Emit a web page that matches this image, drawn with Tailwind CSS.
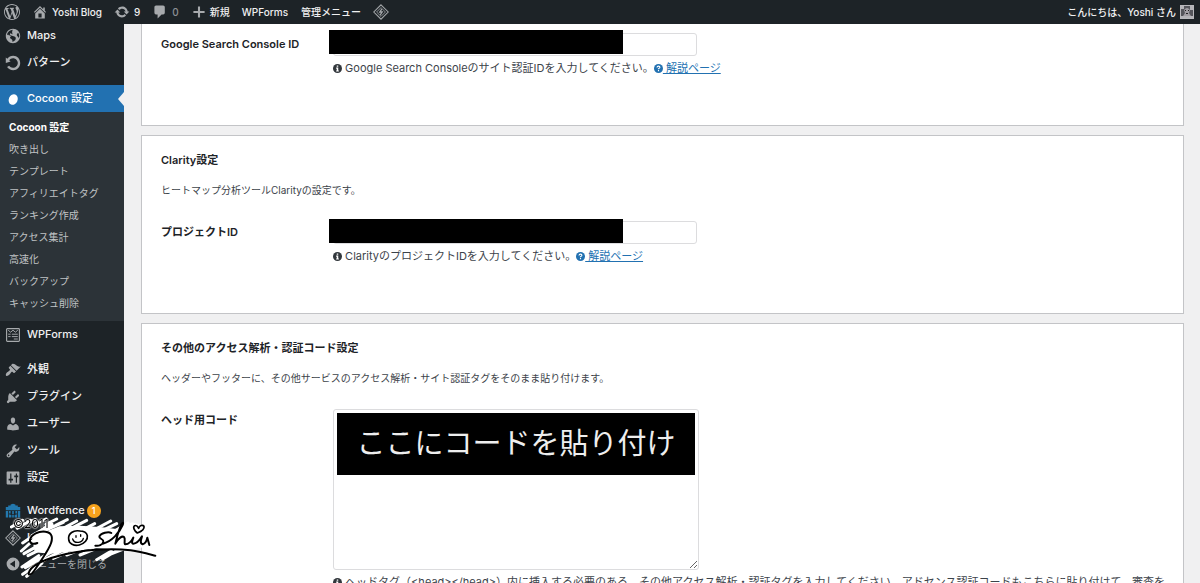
<!DOCTYPE html>
<html lang="ja">
<head>
    <meta charset="UTF-8">
    <meta name="viewport" content="width=device-width, initial-scale=1.0">
    <title>Cocoon 設定 ‹ Yoshi Blog — WordPress</title>
    <script src="https://cdn.jsdelivr.net/npm/@tailwindcss/browser@4"></script>
</head>
<body class="h-screen overflow-hidden bg-[#f0f0f1] font-[Inter,'Noto_Sans_CJK_JP',sans-serif] text-[11px] text-[#3c434a]">

    <!-- Admin bar -->
    <header class="fixed inset-x-0 top-0 z-20 flex h-6 items-center justify-between bg-[#1d2327] pr-[6px] pl-1 text-[10px] font-medium text-[#f0f0f1]">
        <nav class="flex items-center gap-3">
            <a href="#" aria-label="WordPress" class="text-[#a7aaad]">
                <svg class="size-4" viewBox="0 0 20 20" fill="currentColor"><path d="M20 10c0-5.51-4.49-10-10-10C4.48 0 0 4.49 0 10c0 5.52 4.48 10 10 10 5.51 0 10-4.48 10-10zM7.78 15.37L4.37 6.22c.55-.02 1.17-.08 1.17-.08.5-.06.44-1.13-.06-1.11 0 0-1.45.11-2.37.11-.18 0-.37 0-.58-.01C4.12 2.69 6.87 1.11 10 1.11c2.33 0 4.45.87 6.05 2.34-.68-.11-1.65.39-1.65 1.58 0 .74.45 1.36.9 2.1.35.61.55 1.36.55 2.46 0 1.49-1.4 5-1.4 5l-3.03-8.37c.54-.02.82-.17.82-.17.5-.05.44-1.25-.06-1.22 0 0-1.44.12-2.38.12-.87 0-2.33-.12-2.33-.12-.5-.03-.56 1.2-.06 1.22l.92.08 1.26 3.41zM17.41 10c.24-.64.74-1.87.43-4.25.7 1.29 1.05 2.71 1.05 4.25 0 3.29-1.73 6.24-4.4 7.78.97-2.59 1.94-5.2 2.92-7.78zM6.1 18.09C3.12 16.65 1.11 13.53 1.11 10c0-1.3.23-2.48.72-3.59C3.25 10.3 4.67 14.2 6.1 18.09zm4.03-6.63l2.58 6.98c-.86.29-1.76.45-2.71.45-.79 0-1.57-.11-2.29-.33.81-2.38 1.62-4.74 2.42-7.1z"/></svg>
            </a>
            <a href="#" class="flex items-center gap-1">
                <svg class="size-4 text-[#a7aaad]" viewBox="0 0 20 20" fill="currentColor"><path d="M16 8.5l1.53 1.53-1.06 1.06L10 4.6l-6.47 6.49-1.06-1.06L10 2.5l4 4v-2h2v4zm-6-2.46l6 5.99V18H4v-5.97zM12 17v-5H8v5h4z"/></svg>
                Yoshi Blog
            </a>
            <a href="#" class="flex items-center gap-1">
                <svg class="size-4 text-[#a7aaad]" viewBox="0 0 20 20" fill="currentColor"><path d="M10.2 3.28c3.53 0 6.43 2.61 6.92 6h2.08l-3.5 4-3.5-4h2.32c-.45-1.97-2.21-3.45-4.32-3.45-1.45 0-2.73.71-3.54 1.78L4.95 5.66C6.23 4.2 8.11 3.28 10.2 3.28zm-.4 13.44c-3.52 0-6.43-2.61-6.92-6H.8l3.5-4c1.17 1.33 2.33 2.67 3.5 4H5.48c.45 1.97 2.21 3.45 4.32 3.45 1.45 0 2.73-.71 3.54-1.78l1.71 1.95c-1.28 1.46-3.15 2.38-5.25 2.38z"/></svg>
                9
            </a>
            <a href="#" class="flex items-center gap-1 text-[#8c8f94]">
                <svg class="size-4 text-[#a7aaad]" viewBox="0 0 20 20" fill="currentColor"><path d="M5 2h9c1.1 0 2 .9 2 2v7c0 1.1-.9 2-2 2h-2l-5 5v-5H5c-1.1 0-2-.9-2-2V4c0-1.1.9-2 2-2z"/></svg>
                0
            </a>
            <a href="#" class="flex items-center gap-[3px]">
                <svg class="size-4 text-[#a7aaad]" viewBox="0 0 20 20" fill="currentColor"><path d="M17 8.700v2.600h-5.700V17H8.700v-5.700H3V8.700h5.700V3h2.600v5.700z"/></svg>
                新規
            </a>
            <a href="#">WPForms</a>
            <a href="#" class="ml-px">管理メニュー</a>
            <a href="#" aria-label="LiteSpeed" class="text-[#a7aaad]">
                <svg class="size-4" viewBox="0 0 20 20" fill="none" stroke="currentColor"><path d="M10 1l9 9-9 9-9-9z" stroke-width="1.300"/><path d="M10 4.500l5.500 5.500-5.500 5.500L4.500 10z" stroke-width="1"/><path d="M11 6.500L8.500 10h3L9 13.500" stroke-width="1.600"/></svg>
            </a>
        </nav>
        <a href="#" class="flex items-center gap-1">
            こんにちは、Yoshi さん
            <svg class="size-[14px]" viewBox="0 0 14 14"><path d="M0 0h14v14H0z" fill="#b8b8bc"/><path d="M1 1h12v12H1z" fill="#55565c"/><path d="M1 1h3v3H1zM10 1h3v4h-3zM1 11h12v2H1z" fill="#b4b4b8"/><path d="M4 5q3-4 6 0l-1 3 2 3H3l2-3z" fill="#a09da3"/><path d="M5 5h1v1H5zM8 5h1v1H8zM6 8h2v1H6z" fill="#222"/></svg>
        </a>
    </header>

    <div class="flex h-full">
        <!-- Side menu -->
        <aside class="w-[124px] shrink-0 bg-[#1d2327] pt-[22px] font-medium text-[#f0f0f1]">
            <ul>
                <li><a href="#" class="flex h-[27px] items-center gap-[6px] pl-[5px]">
                    <svg class="size-4 text-[#a7aaad]" viewBox="-1 -1 20 20" fill="currentColor"><path d="M9 0C4.030 0 0 4.030 0 9s4.030 9 9 9 9-4.030 9-9-4.030-9-9-9zm3.460 11.950c0 1.470-.8 3.300-4.060 4.700.3-4.170-2.520-3.690-3.200-5 .126-1.100.804-2.063 1.800-2.550-1.552-.266-3-.96-4.180-2 .05.470.280.904.640 1.210-.782-.295-1.458-.817-1.940-1.500.977-3.225 3.883-5.482 7.250-5.630-.84 1.380-1.500 4.130 0 5.570C7.230 7 6.260 5 5.410 5.790c-1.130 1.060.330 2.510 3.420 3.080 3.290.590 3.660 1.580 3.630 3.080zm1.340-4c-.32-1.110.620-2.230 1.690-3.140 1.356 1.955 1.670 4.450.840 6.680-.77-1.890-2.170-2.320-2.530-3.570v.03z"/></svg>
                    Maps</a></li>
                <li><a href="#" class="flex h-[27px] items-center gap-[6px] pl-[5px]">
                    <svg class="size-4 text-[#a7aaad]" viewBox="0 0 20 20" fill="currentColor"><path d="M10.250 1.020c5.100 0 8.750 4.040 8.750 9s-3.650 9-8.750 9c-3.200 0-6.020-1.590-7.680-3.990l2.590-1.520c1.100 1.500 2.860 2.510 4.840 2.510 3.300 0 6-2.790 6-6s-2.700-6-6-6c-1.970 0-3.720 1-4.820 2.490L7 8.020l-6 2v-7L2.890 4.600c1.690-2.170 4.360-3.580 7.360-3.580z"/></svg>
                    パターン</a></li>
                <li class="mt-[9px]">
                    <a href="#" class="relative flex h-[27px] items-center gap-[6px] bg-[#2271b1] pl-[5px] text-white">
                        <svg class="size-4" viewBox="0 0 20 20" fill="currentColor"><ellipse cx="10.500" cy="10.500" rx="5.500" ry="6.800" transform="rotate(22 10 10)"/></svg>
                        Cocoon 設定
                        <span class="absolute top-[7px] right-0 border-y-[7px] border-r-[6px] border-y-transparent border-r-[#f0f0f1]"></span>
                    </a>
                    <ul class="bg-[#2c3338] pt-1 pb-[7px] pl-[9px] text-[10px] leading-[22px] font-normal text-[#c0c3c5]">
                        <li><a href="#" class="block font-bold text-white">Cocoon 設定</a></li>
                        <li><a href="#" class="block">吹き出し</a></li>
                        <li><a href="#" class="block">テンプレート</a></li>
                        <li><a href="#" class="block">アフィリエイトタグ</a></li>
                        <li><a href="#" class="block">ランキング作成</a></li>
                        <li><a href="#" class="block">アクセス集計</a></li>
                        <li><a href="#" class="block">高速化</a></li>
                        <li><a href="#" class="block">バックアップ</a></li>
                        <li><a href="#" class="block">キャッシュ削除</a></li>
                    </ul>
                </li>
                <li><a href="#" class="flex h-[27px] items-center gap-[6px] pl-[5px]">
                    <svg class="size-4 text-[#a7aaad]" viewBox="0 0 20 20" fill="none" stroke="currentColor"><rect x="2" y="2" width="16" height="16" rx="1" stroke-width="1.400"/><path d="M4 4l3 2.500L10 4l3 2.500L16 4M4 9h3M8.500 9H16M4 12h3M8.500 12H16M11 15h5" stroke-width="1.200"/></svg>
                    WPForms</a></li>
                <li class="mt-2"><a href="#" class="flex h-[27px] items-center gap-[6px] pl-[5px]">
                    <svg class="size-4 text-[#a7aaad]" viewBox="0 0 20 20" fill="currentColor"><path d="M14.480 11.060L7.410 3.990l1.500-1.500c.5-.56 2.300-.47 3.510.320 1.210.8 1.430 1.280 2.910 2.100 1.180.640 2.450 1.260 4.450.850zm-.71.710L6.700 4.700 4.930 6.470c-.39.390-.39 1.020 0 1.410l1.060 1.060c.390.390.390 1.030 0 1.420-.6.6-1.430 1.110-2.210 1.690-.35.260-.7.530-1.010.840C1.430 14.230.4 16.080 1.400 17.070c.990 1 2.840-.03 4.180-1.360.310-.31.580-.66.850-1.020.570-.78 1.080-1.610 1.690-2.210.390-.39 1.020-.39 1.410 0l1.060 1.060c.390.390 1.020.390 1.410 0z"/></svg>
                    外観</a></li>
                <li><a href="#" class="flex h-[27px] items-center gap-[6px] pl-[5px]">
                    <svg class="size-4 text-[#a7aaad]" viewBox="0 0 20 20" fill="currentColor"><path d="M13.110 4.360L9.870 7.600 8 5.730l3.240-3.240c.350-.34 1.050-.2 1.560.320.520.510.660 1.210.310 1.550zm-8 1.770l.91-1.120 9.010 9.010-1.190.840c-.71.710-2.630 1.160-3.820 1.160H6.140L4.900 17.260c-.59.590-1.540.590-2.120 0-.59-.58-.59-1.530 0-2.120l1.240-1.240v-3.880c0-1.130.4-3.190 1.090-3.890zm7.260 3.970l3.240-3.240c.340-.35 1.040-.21 1.550.310.520.510.660 1.210.310 1.550l-3.240 3.250z"/></svg>
                    プラグイン</a></li>
                <li><a href="#" class="flex h-[27px] items-center gap-[6px] pl-[5px]">
                    <svg class="size-4 text-[#a7aaad]" viewBox="0 0 20 20" fill="currentColor"><path d="M10 9.250c-2.270 0-2.730-3.440-2.730-3.440C7 4.020 7.820 2 9.970 2c2.160 0 2.980 2.020 2.710 3.810 0 0-.41 3.440-2.680 3.440zm0 2.570L12.720 10c2.390 0 4.520 2.330 4.520 4.530v2.490s-3.650 1.130-7.240 1.130c-3.650 0-7.240-1.130-7.240-1.130v-2.490c0-2.250 1.940-4.480 4.470-4.480z"/></svg>
                    ユーザー</a></li>
                <li><a href="#" class="flex h-[27px] items-center gap-[6px] pl-[5px]">
                    <svg class="size-4 text-[#a7aaad]" viewBox="0 0 20 20" fill="currentColor"><path d="M16.680 9.770c-1.340 1.340-3.300 1.670-4.950.990l-5.410 6.520c-.99.990-2.590.990-3.580 0s-.99-2.590 0-3.570l6.520-5.420c-.68-1.650-.35-3.610.990-4.950 1.280-1.280 3.120-1.620 4.720-1.060l-2.890 2.890 2.820 2.820 2.860-2.870c.530 1.580.180 3.390-1.080 4.650zM3.810 16.210c.4.390 1.040.390 1.430 0 .4-.4.4-1.040 0-1.430-.39-.4-1.030-.4-1.430 0-.39.390-.39 1.030 0 1.430z"/></svg>
                    ツール</a></li>
                <li><a href="#" class="flex h-[27px] items-center gap-[6px] pl-[5px]">
                    <svg class="size-4 text-[#a7aaad]" viewBox="0 0 20 20" fill="currentColor"><path fill-rule="evenodd" d="M18 17V3q0-1-1-1H3Q2 2 2 3v14q0 1 1 1h14q1 0 1-1zM8 11h2v2H8v3H6.500v-3h-2v-2h2V4.500H8zM13.500 9h-2V7h2V4.500H15V7h1.500v2H15v7h-1.500z"/></svg>
                    設定</a></li>
                <li class="mt-[6px]"><a href="#" class="flex h-[27px] items-center gap-[6px] pl-[5px]">
                    <svg class="size-4 text-[#2378ad]" viewBox="0 0 20 20" fill="currentColor"><path d="M1 5h3V3h3V2l3-1 3 1v1h3v2h3v4H1zM1 10h3v8H1zM5 10h2v3H5zM9 10h2v4H9zM13 10h2v3h-2zM16 10h3v8h-3zM5 14l3 1v3H5zM9 15h2v3H9zM12 15l3-1v4h-3z"/></svg>
                    Wordfence
                    <span class="-ml-1 flex size-[14px] items-center justify-center rounded-full bg-[#f6a21c] text-[9px] text-white">1</span></a></li>
                <li><a href="#" class="flex h-[27px] items-center gap-[6px] pl-[5px]">
                    <svg class="size-4 text-[#a7aaad]" viewBox="0 0 20 20" fill="none" stroke="currentColor"><path d="M10 1l9 9-9 9-9-9z" stroke-width="1.300"/><path d="M10 4.500l5.500 5.500-5.500 5.500L4.500 10z"/><path d="M11 6.500L8.500 10h3L9 13.500" stroke-width="1.600"/></svg>
                    LiteSpeed</a></li>
                <li><button type="button" class="flex h-[26px] items-center gap-[6px] pl-[5px] text-[10px] font-normal text-[#a7aaad]">
                    <svg class="size-4" viewBox="0 0 20 20" fill="currentColor"><path fill-rule="evenodd" d="M10 2a8 8 0 1 0 0 16 8 8 0 0 0 0-16zm2.500 3.500v9L6 10z"/></svg>
                    メニューを閉じる</button></li>
            </ul>
        </aside>

        <!-- Settings -->
        <main class="min-w-0 flex-1 space-y-[9px] pr-4 pl-[17px]">
            <section class="border border-t-0 border-[#c3c4c7] bg-white pt-[33px] pr-2 pb-[49px] pl-[19px]">
                <div class="flex">
                    <label for="search-console" class="w-[172px] shrink-0 leading-[22px] font-semibold text-[#1d2327]">Google Search Console ID</label>
                    <div>
                        <div class="relative w-[364px]">
                            <input type="text" id="search-console" class="block h-[23px] w-full rounded-[3px] border border-[#dcdcde] bg-white px-2">
                            <span class="absolute -top-[3px] -left-1 h-6 w-[294px] bg-black"></span>
                        </div>
                        <p class="mt-1 leading-4">
                            <svg class="inline size-[9px] align-[-1px]" viewBox="0 0 12 12"><circle cx="6" cy="6" r="6" fill="#32373c"/><path d="M5 2h2v1.700H5zM4.200 4.800H7v3.700h.8V10H4.200V8.500H5V6.300h-.8z" fill="#fff"/></svg>
                            Google Search Consoleのサイト認証IDを入力してください。<a href="#" class="text-[#2271b1] underline"><svg class="inline size-[9px] align-[-1px]" viewBox="0 0 12 12"><circle cx="6" cy="6" r="6" fill="currentColor"/><path d="M4 4.600Q4.200 2.900 6 2.900t1.900 1.500Q7.900 5.400 6 6.200V7M6 8v1.600" fill="none" stroke="#fff" stroke-width="1.500"/></svg> 解説ページ</a>
                        </p>
                    </div>
                </div>
            </section>

            <section class="border border-[#c3c4c7] bg-white pt-4 pr-2 pb-[49px] pl-[19px]">
                <h2 class="leading-4 font-semibold text-[#1d2327]">Clarity設定</h2>
                <p class="mt-[14px] text-[10px] leading-4">ヒートマップ分析ツールClarityの設定です。</p>
                <div class="mt-[23px] flex">
                    <label for="clarity-id" class="w-[172px] shrink-0 leading-[22px] font-semibold text-[#1d2327]">プロジェクトID</label>
                    <div>
                        <div class="relative w-[364px]">
                            <input type="text" id="clarity-id" class="block h-[23px] w-full rounded-[3px] border border-[#dcdcde] bg-white px-2">
                            <span class="absolute -top-[2px] -left-1 h-6 w-[294px] bg-black"></span>
                        </div>
                        <p class="mt-1 leading-4">
                            <svg class="inline size-[9px] align-[-1px]" viewBox="0 0 12 12"><circle cx="6" cy="6" r="6" fill="#32373c"/><path d="M5 2h2v1.700H5zM4.200 4.800H7v3.700h.8V10H4.200V8.500H5V6.300h-.8z" fill="#fff"/></svg>
                            ClarityのプロジェクトIDを入力してください。<a href="#" class="text-[#2271b1] underline"><svg class="inline size-[9px] align-[-1px]" viewBox="0 0 12 12"><circle cx="6" cy="6" r="6" fill="currentColor"/><path d="M4 4.600Q4.200 2.900 6 2.900t1.900 1.500Q7.900 5.400 6 6.200V7M6 8v1.600" fill="none" stroke="#fff" stroke-width="1.500"/></svg> 解説ページ</a>
                        </p>
                    </div>
                </div>
            </section>

            <section class="border border-[#c3c4c7] bg-white pt-4 pr-2 pb-[49px] pl-[19px]">
                <h2 class="leading-4 font-semibold text-[#1d2327]">その他のアクセス解析・認証コード設定</h2>
                <p class="mt-[14px] text-[10px] leading-4">ヘッダーやフッターに、その他サービスのアクセス解析・サイト認証タグをそのまま貼り付けます。</p>
                <div class="mt-[23px] flex">
                    <label for="head-code" class="w-[172px] shrink-0 leading-[22px] font-semibold text-[#1d2327]">ヘッド用コード</label>
                    <div>
                        <div class="relative w-[366px]">
                            <textarea id="head-code" class="block h-[161px] w-full rounded-[3px] border border-[#dcdcde] bg-white p-2"></textarea>
                            <div class="absolute inset-x-1 top-1 flex h-[62px] items-center justify-center bg-black text-[29px] text-[#eee]">ここにコードを貼り付け</div>
                        </div>
                        <p class="mt-1 leading-4">
                            <svg class="inline size-[9px] align-[-1px]" viewBox="0 0 12 12"><circle cx="6" cy="6" r="6" fill="#32373c"/><path d="M5 2h2v1.700H5zM4.200 4.800H7v3.700h.8V10H4.200V8.500H5V6.300h-.8z" fill="#fff"/></svg>
                            ヘッドタグ（&lt;head&gt;&lt;/head&gt;）内に挿入する必要のある、その他アクセス解析・認証タグを入力してください。アドセンス認証コードもこちらに貼り付けて、審査を受けてください。
                        </p>
                    </div>
                </div>
            </section>
        </main>
    </div>

    <!-- Signature stamp -->
    <div class="pointer-events-none fixed bottom-1 left-[10px] z-30 h-[66px] w-[150px]">
        <svg class="absolute inset-0 size-full" viewBox="30 100 450 198" fill="none" stroke-linecap="round" stroke-linejoin="round">
            <!-- brushed white backing -->
            <path fill="#fff" d="M96 172L178 140 240 138 300 142 350 148 396 128 440 140 448 200 380 212 290 206 210 216 150 222 104 218z"/>
            <path stroke="#fff" stroke-width="9" d="M34 142l34-20M52 146l40-24M84 130l22-10M108 132l30-14M138 134l32-16M168 136l34-16M64 214l60-54M68 190l70-48M72 222l60-34M84 228l60-30M96 168l60-34M130 154l60-26M190 146l40-22M214 146l46-24M250 150l34-18M280 152l52-28M300 156l50-24M340 156l40-24M356 152l28-22M66 262l50-34M76 264l60-36M68 284l50-34M80 290l46-40M96 250l60-34M130 242l50-26M160 236l40-18M200 226l40-16M240 226l40-16M290 240l44-26M308 238l44-26M330 224l40-16"/>
            <g stroke="#000">
                <path stroke-width="6" d="M112 190c-14 6-24 0-22-10 4-16 26-26 46-24 22 2 24 20 14 42-12 26-32 52-48 76-8 12-18 14-16 6 6-20 42-38 86-50 70-20 160-26 220-18 28 4 50 10 74 16"/>
                <path stroke-width="5" d="M240 154c-20-4-36 8-34 24 0 14 16 22 32 18 16-4 26-16 24-28-2-10-12-14-24-14z"/>
                <path stroke-width="4" d="M218 178q4 12 18 10 12-2 14-12M228 168v5M242 165v5"/>
                <path stroke-width="6" d="M334 160c-8-6-32 0-36 10-2 8 14 8 12 16-2 10-14 14-24 12M308 192c28-6 50-34 60-56 4-10-2-8-6 2-6 16-12 36-16 54 8-16 20-24 26-20 6 6-2 20 4 22 10 0 20-12 24-20-4 10-6 18 0 18 12 0 20-12 26-22-4 12-6 22 2 24 8-2 12-10 14-20l6 22"/>
                <path stroke-width="5" d="M412 160c-10-8-14-18-8-22 6-2 10 4 12 8 2-8 12-12 16-6 2 8-10 16-20 20z"/>
            </g>
        </svg>
        <span class="absolute top-1 left-[3px] text-[12px] leading-[14px] text-black [text-shadow:0_0_1px_#fff,0_0_2px_#fff,0_0_2px_#fff]">©2011</span>
    </div>
</body>
</html>
